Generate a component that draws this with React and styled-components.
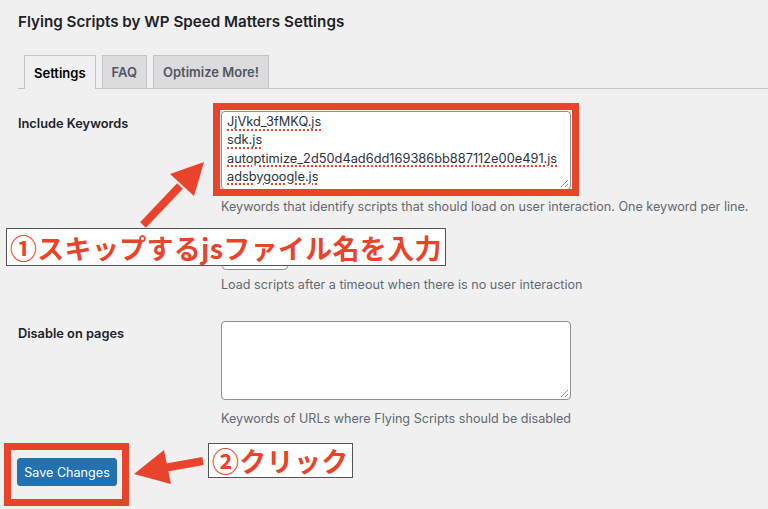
import React from "react";
import styled, { createGlobalStyle } from "styled-components";

const GlobalStyle = createGlobalStyle`
  html, body {
    margin: 0;
    padding: 0;
    background: #f0f0f1;
  }
  body {
    font-family: Inter, "Liberation Sans", "Noto Sans CJK JP", sans-serif;
    color: #1d2327;
  }
`;

const RED = "#e9442b";

const Page = styled.div`
  position: relative;
  width: 768px;
  height: 509px;
  overflow: hidden;
  padding: 12px 0 0 18px;
  box-sizing: border-box;
`;

const Title = styled.h2`
  margin: 0;
  font-size: 15.2px;
  line-height: 20px;
  font-weight: 600;
  color: #1d2327;
`;

const TabBar = styled.nav`
  display: flex;
  gap: 6px;
  margin-top: 23px;
  padding-left: 6px;
  border-bottom: 1px solid #c3c4c7;
  height: 33px;
`;

const Tab = styled.a`
  display: flex;
  align-items: center;
  padding: 0 9px;
  border: 1px solid #c3c4c7;
  border-bottom: none;
  background: ${(p) => (p.$active ? "#f0f0f1" : "#dcdcde")};
  color: ${(p) => (p.$active ? "#000" : "#50575e")};
  font-size: 13px;
  font-weight: 600;
  margin-bottom: ${(p) => (p.$active ? "-1px" : "0")};
  height: ${(p) => (p.$active ? "34px" : "33px")};
  box-sizing: border-box;
`;

const Row = styled.div`
  display: grid;
  grid-template-columns: 203px 1fr;
  margin-top: ${(p) => p.$top}px;
`;

const Label = styled.div`
  font-size: 12.8px;
  line-height: 18px;
  font-weight: 600;
  color: #1d2327;
  margin-top: 4px;
`;

const Field = styled.div`
  display: flex;
  flex-direction: column;
  align-items: flex-start;
`;

const Highlight = styled.div`
  position: relative;
  display: inline-block;
  &::after {
    content: "";
    position: absolute;
    inset: ${(p) => p.$inset};
    border: 7px solid ${RED};
    pointer-events: none;
  }
`;

const TextBox = styled.div`
  position: relative;
  width: 350px;
  height: ${(p) => p.$h}px;
  box-sizing: border-box;
  background: #fff;
  border: 1px solid #8c8f94;
  border-radius: 4px;
  padding: 1px 5px;
  font-size: 12.8px;
  line-height: 18.3px;
  color: #2c3338;
`;

const Line = styled.div`
  span {
    text-decoration: underline dotted ${RED} 1.5px;
    text-underline-offset: 3px;
  }
`;

const Grip = styled.svg`
  position: absolute;
  right: 2px;
  bottom: 2px;
`;

const NumberInput = styled.div`
  width: 66px;
  height: 30px;
  box-sizing: border-box;
  margin-left: 1px;
  background: #fff;
  border: 1px solid #8c8f94;
  border-radius: 4px;
`;

const Description = styled.p`
  margin: ${(p) => p.$gap}px 0 0;
  font-size: 12.6px;
  line-height: 20px;
  color: #646970;
`;

const SaveButton = styled.button`
  height: 28px;
  width: 100px;
  padding: 0;
  background: #2271b1;
  border: 1px solid #2271b1;
  border-radius: 3px;
  color: #fff;
  font-family: inherit;
  font-size: 12.6px;
  white-space: nowrap;
`;

const Submit = styled.div`
  margin-top: 29px;
  margin-left: -1px;
`;

const Note = styled.div`
  position: absolute;
  left: ${(p) => p.$x}px;
  top: ${(p) => p.$y}px;
  height: ${(p) => p.$h}px;
  padding: 0 ${(p) => p.$pad}px;
  display: flex;
  align-items: center;
  background: #fff;
  border: 1px solid #555;
  box-sizing: border-box;
  color: ${RED};
  font-family: "Noto Sans CJK JP", sans-serif;
  font-weight: 700;
  font-size: 27px;
  letter-spacing: 0.3px;
  white-space: nowrap;
`;

const Arrows = styled.svg`
  position: absolute;
  left: 0;
  top: 0;
  pointer-events: none;
`;

function ResizeGrip() {
  return (
    <Grip width="8" height="8" viewBox="0 0 8 8">
      <path d="M1 8 L8 1 M5 8 L8 5" stroke="#8c8f94" strokeWidth="1" />
    </Grip>
  );
}

const keywords = [
  "JjVkd_3fMKQ.js",
  "sdk.js",
  "autoptimize_2d50d4ad6dd169386bb887112e00e491.js",
  "adsbygoogle.js",
];

export default function App() {
  return (
    <>
      <GlobalStyle />
      <Page>
        <Title>Flying Scripts by WP Speed Matters Settings</Title>
        <TabBar>
          <Tab $active>Settings</Tab>
          <Tab>FAQ</Tab>
          <Tab>Optimize More!</Tab>
        </TabBar>

        <Row $top={22}>
          <Label>Include Keywords</Label>
          <Field>
            <Highlight $inset="-8px -8px -6px -8px">
              <TextBox $h={79}>
                {keywords.map((k) => (
                  <Line key={k}>
                    <span>{k}</span>
                  </Line>
                ))}
                <ResizeGrip />
              </TextBox>
            </Highlight>
            <Description $gap={7}>
              Keywords that identify scripts that should load on user interaction. One keyword per line.
            </Description>
          </Field>
        </Row>

        <Row $top={23}>
          <div />
          <Field>
            <NumberInput />
            <Description $gap={5}>
              Load scripts after a timeout when there is no user interaction
            </Description>
          </Field>
        </Row>

        <Row $top={26}>
          <Label>Disable on pages</Label>
          <Field>
            <TextBox $h={79}>
              <ResizeGrip />
            </TextBox>
            <Description $gap={9}>
              Keywords of URLs where Flying Scripts should be disabled
            </Description>
          </Field>
        </Row>

        <Submit>
          <Highlight $inset="-15px -12px -20px -13px">
            <SaveButton>Save Changes</SaveButton>
          </Highlight>
        </Submit>

        <Note $x={6} $y={228} $h={38} $pad={3}>
          ①スキップするjsファイル名を入力
        </Note>
        <Note $x={208} $y={443} $h={35} $pad={3}>
          ②クリック
        </Note>

        <Arrows width="768" height="509" viewBox="0 0 768 509">
          <line x1="143" y1="225" x2="180" y2="186" stroke={RED} strokeWidth="8" />
          <polygon points="204,162 170,174 194,196" fill={RED} />
          <line x1="203" y1="461" x2="164" y2="468" stroke={RED} strokeWidth="8" />
          <polygon points="134,474 164,450 171,484" fill={RED} />
        </Arrows>
      </Page>
    </>
  );
}
